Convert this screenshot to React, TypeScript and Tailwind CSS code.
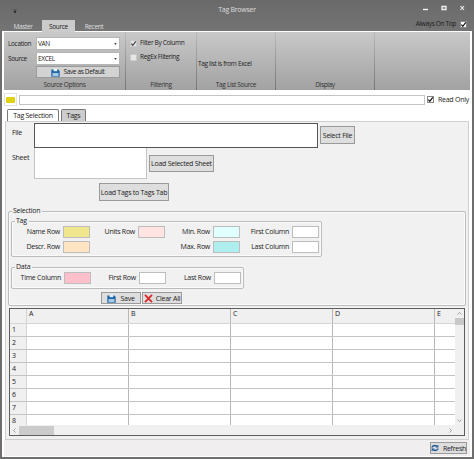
import { useState } from 'react'
import type { ReactNode } from 'react'
import clsx from 'clsx'

const columns = ['A', 'B', 'C', 'D']
const rows = [1, 2, 3, 4, 5, 6, 7, 8]

function Check({ checked, muted }: { checked?: boolean; muted?: boolean }) {
  return (
    <span
      className={clsx(
        'flex size-[7px] shrink-0 items-center justify-center border',
        muted ? 'border-[#c9c9c9] bg-[#e6e6e6]' : 'border-[#888] bg-white'
      )}
    >
      {checked && (
        <svg viewBox="0 0 8 8" className="size-[7px] shrink-0" fill="none" stroke={muted ? '#444' : '#111'} strokeWidth="1.4">
          <path d="M1.5 4.2 L3.2 6 L6.6 1.6" />
        </svg>
      )}
    </span>
  )
}

function SaveIcon() {
  return (
    <svg viewBox="0 0 9 9" className="size-[9px] shrink-0">
      <path d="M0.3 1.5 H7.2 L8.7 3 V8.7 H0.3 Z" fill="#1f66a8" />
      <path d="M2.6 0.3 H6.2 V3.2 H2.6 Z" fill="#e3eef7" />
      <path d="M1.5 5 H7.5 V8.2 H1.5 Z" fill="#a9cae4" />
    </svg>
  )
}

function Button({ className, children }: { className?: string; children: ReactNode }) {
  return (
    <button
      className={clsx(
        'flex shrink-0 items-center justify-center whitespace-nowrap border border-[#9a9a9a] leading-none',
        className
      )}
    >
      {children}
    </button>
  )
}

function Combo({ label, value }: { label: string; value: string }) {
  return (
    <div className="flex h-[13px] items-center">
      <span className="w-[32px] pl-[4px]">{label}</span>
      <div className="flex h-[13px] w-[84px] items-center justify-between border border-[#b5b5b5] bg-white pl-px pr-[2px]">
        <span>{value}</span>
        <svg viewBox="0 0 4 3" className="h-[2px] w-[3px]">
          <path d="M0 0 H4 L2 3 Z" fill="#444" />
        </svg>
      </div>
    </div>
  )
}

function Field({ label, color, width }: { label: string; color: string; width: string }) {
  return (
    <div className={clsx('flex h-[12px] shrink-0 items-center justify-end gap-[3px]', width)}>
      <span className="whitespace-nowrap">{label}</span>
      <span className={clsx('h-[12px] w-[27px] shrink-0 border border-[#bdbdbd]', color)} />
    </div>
  )
}

function Group({ title, className, children }: { title: string; className?: string; children: ReactNode }) {
  return (
    <fieldset className={clsx('relative rounded-[2px] border border-[#bcbcbc] shadow-[inset_0_0_0_1px_#fafafa]', className)}>
      <span className="absolute -top-[6px] left-[3px] bg-[#f1f1f1] pl-px pr-[2px] leading-[10px]">{title}</span>
      {children}
    </fieldset>
  )
}

function Panel({ title, className, children }: { title: string; className: string; children?: ReactNode }) {
  return (
    <div className={clsx('flex h-full shrink-0 flex-col', className)}>
      <div className="h-[47px]">{children}</div>
      <div className="text-center leading-[11px] text-[#333]">{title}</div>
    </div>
  )
}

function Divider() {
  return <div className="h-full w-px shrink-0 bg-linear-to-b from-[#bbb] to-[#747474]" />
}

function Ribbon() {
  return (
    <div className="mx-[2px] mt-px flex h-[58px] bg-linear-to-b from-[#c9c9c9] to-[#a2a2a2] text-[6.5px] tracking-[-0.34px]">
      <Panel title="Source Options" className="w-[121px]">
        <div className="flex flex-col gap-[2px] pt-[5px]">
          <Combo label="Location" value="VAN" />
          <Combo label="Source" value="EXCEL" />
          <Button className="-mt-px ml-[32px] h-[12px] w-[84px] gap-[3px] bg-[#d3d3d3]">
            <SaveIcon />
            Save as Default
          </Button>
        </div>
      </Panel>
      <Divider />
      <Panel title="Filtering" className="w-[70px]">
        <div className="flex flex-col gap-[4px] pl-[4px] pt-[6px]">
          <label className="flex h-[10px] items-center gap-[3px] whitespace-nowrap"><Check checked muted />Filter By Column</label>
          <label className="flex h-[10px] items-center gap-[3px] whitespace-nowrap"><Check muted />RegEx Filtering</label>
        </div>
      </Panel>
      <Divider />
      <Panel title="Tag List Source" className="w-[78px]">
        <div className="whitespace-nowrap pl-px pt-[27px] leading-[10px]">Tag list is from Excel</div>
      </Panel>
      <Divider />
      <Panel title="Display" className="w-[98px]" />
      <Divider />
    </div>
  )
}

function TagSelection() {
  return (
    <div className="mx-[3px] h-[319px] border border-[#cfcfcf] bg-[#f1f1f1] pt-px">
      <div className="flex h-[25px]">
        <span className="w-[28px] pl-[6px] pt-[5px] leading-[10px]">File</span>
        <div className="h-[25px] w-[284px] border border-[#555] bg-white" />
        <Button className="ml-[2px] mt-[3px] h-[18px] w-[35px] bg-[#dedede]">Select File</Button>
      </div>
      <div className="flex h-[31px]">
        <span className="w-[28px] pl-[6px] pt-[5px] leading-[10px]">Sheet</span>
        <div className="h-[31px] w-[113px] border border-t-0 border-[#c4c4c4] bg-white" />
        <Button className="ml-[2px] mt-[7px] h-[17px] w-[65px] bg-[#dedede]">Load Selected Sheet</Button>
      </div>
      <Button className="ml-[93px] mt-[4px] h-[18px] w-[70px] bg-[#dedede]">Load Tags to Tags Tab</Button>

      <Group title="Selection" className="ml-[2px] mt-[10px] h-[95px] w-[458px]">
        <Group title="Tag" className="ml-[2px] mt-[9px] h-[36px] w-[311px] pt-[4px]">
          <div className="flex">
            <Field label="Name Row" color="bg-[#f0e68c]" width="w-[78px]" />
            <Field label="Units Row" color="bg-[#ffe4e1]" width="w-[75px]" />
            <Field label="Min. Row" color="bg-[#e0ffff]" width="w-[75px]" />
            <Field label="First Column" color="bg-white" width="w-[79px]" />
          </div>
          <div className="mt-[3px] flex">
            <Field label="Descr. Row" color="bg-[#ffe4c4]" width="w-[78px]" />
            <span className="w-[75px]" />
            <Field label="Max. Row" color="bg-[#afeeee]" width="w-[75px]" />
            <Field label="Last Column" color="bg-white" width="w-[79px]" />
          </div>
        </Group>
        <Group title="Data" className="ml-[2px] mt-[10px] h-[22px] w-[233px] pt-[4px]">
          <div className="flex">
            <Field label="Time Column" color="bg-[#ffc0cb]" width="w-[79px]" />
            <Field label="First Row" color="bg-white" width="w-[75px]" />
            <Field label="Last Row" color="bg-white" width="w-[75px]" />
          </div>
        </Group>
        <div className="ml-[92px] mt-[3px] flex gap-px">
          <Button className="h-[12px] w-[40px] gap-[4px] bg-[#dedede]">
            <SaveIcon />
            Save
          </Button>
          <Button className="h-[12px] w-[40px] gap-[3px] bg-[#dedede]">
            <svg viewBox="0 0 9 9" className="size-[9px] shrink-0" stroke="#dc2828" strokeWidth="1.8">
              <path d="M1 0.8 L8 8.2 M8 0.8 L1 8.2" />
            </svg>
            Clear All
          </Button>
        </div>
      </Group>
      <Sheet />
    </div>
  )
}

function Arrow({ d }: { d: string }) {
  return (
    <svg viewBox="0 0 5 5" className="size-[5px]" fill="none" stroke="#909090" strokeWidth="0.8">
      <path d={d} />
    </svg>
  )
}

function Sheet() {
  return (
    <div className="ml-[3px] mt-[2px] flex h-[128px] w-[456px] border border-[#5d5d5d] bg-[#f0f0f0]">
      <div className="flex w-[445px] flex-col">
        <div className="h-[116px] overflow-hidden">
          <div className="flex h-[15px] border-b border-[#d5d5d5]">
            <span className="w-[17px] shrink-0 border-r border-[#d5d5d5]" />
            {columns.map((c) => (
              <span key={c} className="w-[102px] shrink-0 border-r border-[#b8b8b8] pl-[2px] leading-[10px]">{c}</span>
            ))}
            <span className="pl-[2px] leading-[10px]">E</span>
          </div>
          {rows.map((r) => (
            <div key={r} className="flex h-[13px] border-b border-[#c4c4c4] bg-white">
              <span className="w-[17px] shrink-0 border-r border-[#d5d5d5] bg-[#f0f0f0] pl-[2px] leading-[11px]">{r}</span>
              {columns.map((c) => (
                <span key={c} className="w-[102px] shrink-0 border-r border-[#b8b8b8]" />
              ))}
            </div>
          ))}
        </div>
        <div className="flex h-[10px] items-center justify-between pl-[2px] pr-[2px]">
          <div className="flex items-center gap-[2px]">
            <Arrow d="M3.5 0.5 L1.5 2.5 L3.5 4.5" />
            <span className="h-[9px] w-[35px] bg-[#cbcbcb]" />
          </div>
          <Arrow d="M1.5 0.5 L3.5 2.5 L1.5 4.5" />
        </div>
      </div>
      <div className="flex w-[9px] flex-col items-center pt-[2px]">
        <Arrow d="M0.5 3.5 L2.5 1.5 L4.5 3.5" />
        <span className="mt-[2px] h-[7px] w-[9px] bg-[#c8c8c8]" />
        <span className="h-[93px]" />
        <Arrow d="M0.5 1.5 L2.5 3.5 L4.5 1.5" />
      </div>
    </div>
  )
}

export default function App() {
  const [tab, setTab] = useState('Source')

  return (
    <div className="h-[459px] w-[474px] overflow-hidden bg-[#6e6e6e] font-['Open_Sans','Noto_Sans',sans-serif] text-[7px] leading-[10px] tracking-[-0.26px] text-[#222]">
      <header className="flex h-[31px] flex-col bg-linear-to-b from-[#6a6a6a] to-[#747474]">
        <div className="flex h-[20px] items-center">
          <div className="flex w-[130px] items-center pl-[13px] pt-[2px]">
            <svg viewBox="0 0 4 5" className="h-[5px] w-[4px]">
              <path d="M0.5 1 H3.5 M1 2.5 H3 L2 4 Z" stroke="#222" strokeWidth="0.6" />
            </svg>
          </div>
          <div className="w-[214px] text-center text-[#dcdcdc]">Tag Browser</div>
          <svg viewBox="0 0 44 8" className="ml-[78px] mt-[-4px] h-[8px] w-[44px]" fill="none" stroke="#f4f4f4">
            <path d="M1 5.5 H6" strokeWidth="1.4" />
            <path d="M20 2.5 H24 V5.5 H20 Z" strokeWidth="1.3" />
            <path d="M38.5 2 L42 6 M42 2 L38.5 6" strokeWidth="1.1" />
          </svg>
        </div>
        <div className="flex h-[11px] items-start text-[6.5px] tracking-[-0.34px]">
          <nav className="flex h-[12px] pl-[4px]">
            {['Master', 'Source', 'Recent'].map((t) => (
              <button
                key={t}
                onClick={() => setTab(t)}
                className={clsx(
                  'h-[12px] shrink-0 leading-[13px]',
                  t === 'Source' ? 'w-[33px]' : 'w-[38px]',
                  tab === t ? 'bg-[#cbcbcb] text-[#222]' : 'text-[#dedede]'
                )}
              >
                {t}
              </button>
            ))}
          </nav>
          <label className="-mt-px ml-auto flex items-center gap-[4px] pr-[7px] text-[#1c1c1c]">
            Always On Top
            <Check checked />
          </label>
        </div>
      </header>

      <main className="mx-[2px] flex h-[426px] flex-col bg-white">
        <Ribbon />
        <div className="flex h-[19px] items-center">
          <span className="ml-[2px] flex size-[13px] items-center justify-center border border-[#e2e2e2]">
            <span className="h-[6px] w-[9px] rounded-[1px] bg-[#e0d210]" />
          </span>
          <span className="ml-[2px] h-[10px] w-[406px] border border-[#c4c4c4]" />
          <label className="ml-[2px] flex items-center gap-[4px] whitespace-nowrap">
            <Check checked />
            Read Only
          </label>
        </div>
        <div className="flex h-[12px] items-end pl-[5px]">
          <span className="h-[12px] w-[52px] shrink-0 rounded-t-[2px] border border-b-0 border-[#777] bg-white text-center leading-[12px]">Tag Selection</span>
          <span className="ml-[2px] h-[12px] w-[25px] shrink-0 rounded-t-[2px] border border-b-0 border-[#777] bg-[#cdcdcd] text-center leading-[12px]">Tags</span>
        </div>
        <TagSelection />
        <footer className="mx-[2px] flex h-[16px] justify-end bg-[#f0eeee] pr-[3px] pt-[2px]">
          <Button className="h-[12px] w-[37px] gap-[4px] bg-[#dedede]">
            <svg viewBox="0 0 8 8" className="size-[8px] shrink-0" fill="none" stroke="#1f5a96" strokeWidth="1.5">
              <path d="M1 3.5 C1.3 1.6 4 1 5.8 2.4 M7 4.5 C6.7 6.4 4 7 2.2 5.6" />
              <path d="M7.4 0.6 V3.6 H4.4 Z M0.6 7.4 V4.4 H3.6 Z" fill="#1f5a96" stroke="none" />
            </svg>
            Refresh
          </Button>
        </footer>
      </main>
    </div>
  )
}
